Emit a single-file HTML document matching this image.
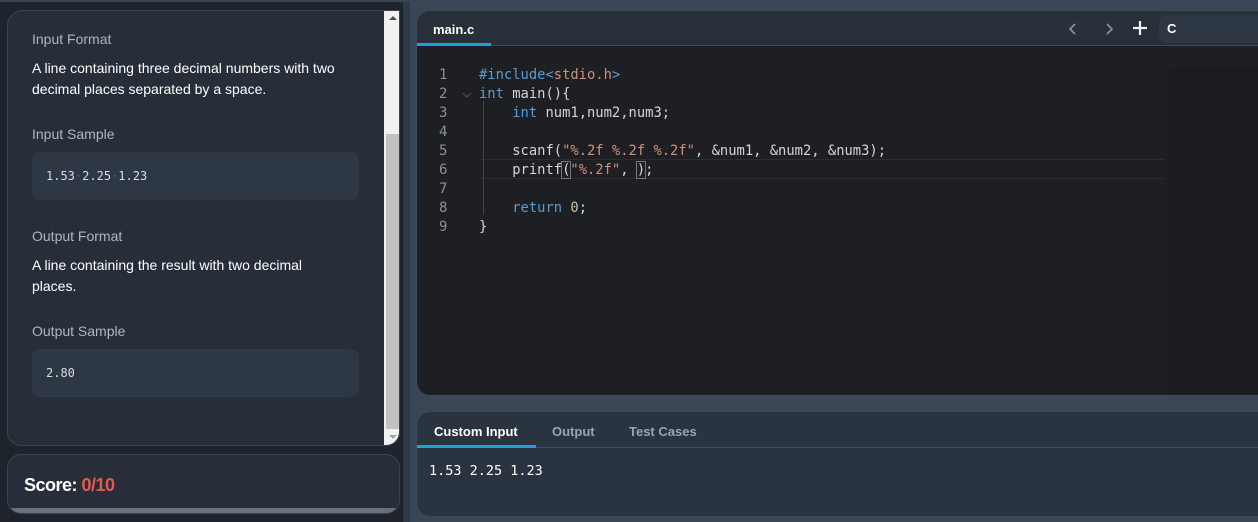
<!DOCTYPE html>
<html><head><style>
*{margin:0;padding:0;box-sizing:border-box}
body{width:1258px;height:522px;overflow:hidden;background:#1f242c;font-family:"Liberation Sans",sans-serif;position:relative}
.abs{position:absolute}
.mono{font-family:"DejaVu Sans Mono","Liberation Mono",monospace}
</style></head><body>
<div class="abs" style="left:0;top:0;width:1258px;height:2px;background:#394454"></div>
<div class="abs" style="left:7px;top:10px;width:393px;height:436px;background:#282e39;border:1px solid #394352;border-radius:16px 0 14px 14px;overflow:hidden">
  <div class="abs" style="left:24px;top:20px;color:#aeb6c2;font-size:14px">Input Format</div>
  <div class="abs" style="left:24px;top:47px;width:335px;color:#fff;font-size:14px;line-height:21px">A line containing three decimal numbers with two decimal places separated by a space.</div>
  <div class="abs" style="left:24px;top:115px;color:#aeb6c2;font-size:14px">Input Sample</div>
  <div class="abs mono" style="left:24px;top:141px;width:327px;height:48px;background:#2e3744;border-radius:8px;color:#d8dde3;font-size:12px;padding:17px 14px">1.53<span style="color:#5a6472">·</span>2.25<span style="color:#5a6472">·</span>1.23</div>
  <div class="abs" style="left:24px;top:217px;color:#aeb6c2;font-size:14px">Output Format</div>
  <div class="abs" style="left:24px;top:244px;width:305px;color:#fff;font-size:14px;line-height:21px">A line containing the result with two decimal places.</div>
  <div class="abs" style="left:24px;top:312px;color:#aeb6c2;font-size:14px">Output Sample</div>
  <div class="abs mono" style="left:24px;top:338px;width:327px;height:48px;background:#2e3744;border-radius:8px;color:#d8dde3;font-size:12px;padding:17px 14px">2.80</div>
  <div class="abs" style="left:376px;top:0;width:17px;height:436px;background:#f1f1f1"></div>
  <div class="abs" style="left:378px;top:123px;width:13px;height:295px;background:#c1c1c1"></div>
  <div class="abs" style="left:381px;top:5px;width:0;height:0;border-left:4px solid transparent;border-right:4px solid transparent;border-bottom:4px solid #505050"></div>
  <div class="abs" style="left:381px;top:424px;width:0;height:0;border-left:4px solid transparent;border-right:4px solid transparent;border-top:4px solid #a3a3a3"></div>
</div>
<div class="abs" style="left:7px;top:454px;width:393px;height:60px;background:#282e39;border:1px solid #394352;border-radius:14px;overflow:hidden">
  <div class="abs" style="left:16px;top:20px;color:#fff;font-size:18px;font-weight:bold;letter-spacing:-0.5px">Score: <span style="color:#e8584a">0/10</span></div>
  <div class="abs" style="left:0;top:53px;width:393px;height:7px;background:#6b717b"></div>
</div>
<div class="abs" style="left:403px;top:2px;width:855px;height:520px;background:#3a4656"></div>
<div class="abs" style="left:403px;top:2px;width:7px;height:520px;background:#2f3a48"></div>
<div class="abs" style="left:416px;top:10px;width:850px;height:386px;background:#1e1f22;border:1px solid #3d4a5a;border-radius:14px 0 0 14px;overflow:hidden">
  <div class="abs" style="left:0;top:0;width:850px;height:35px;background:#283039;border-bottom:1px solid #3d4a5a"></div>
  <div class="abs" style="left:16px;top:11px;color:#fff;font-size:13px;font-weight:bold">main.c</div>
  <div class="abs" style="left:0;top:32px;width:74px;height:3px;background:#1fa0dc"></div>
  <svg class="abs" style="left:650px;top:11px" width="12" height="14"><path d="M8 2 L3 7 L8 12" stroke="#8a93a0" stroke-width="1.6" fill="none"/></svg>
  <svg class="abs" style="left:686px;top:11px" width="12" height="14"><path d="M4 2 L9 7 L4 12" stroke="#8a93a0" stroke-width="1.6" fill="none"/></svg>
  <svg class="abs" style="left:716px;top:10px" width="14" height="14"><path d="M7 0 V14 M0 7 H14" stroke="#eef0f3" stroke-width="2.2"/></svg>
  <div class="abs" style="left:742px;top:4px;width:110px;height:28px;background:#2e3744;border-radius:8px;color:#fff;font-size:13px;font-weight:bold;padding:6px 8px">C</div>
  <div class="abs" style="left:752px;top:55px;width:98px;height:330px;background:#1b1c1f"></div>
  <div class="abs" style="left:62px;top:148px;width:685px;height:20px;border-top:1px solid #2c2d31;border-bottom:1px solid #2c2d31"></div>
  <div class="abs" style="left:66px;top:90px;width:1px;height:114px;background:#444"></div>
  <pre class="abs mono" style="left:22px;top:55px;color:#8c9199;font-size:14px;line-height:19px;text-align:right">1
2
3
4
5
6
7
8
9</pre>
  <svg class="abs" style="left:45px;top:80px" width="10" height="8"><path d="M1 2 L5 6 L9 2" stroke="#555" stroke-width="1" fill="none"/></svg>
  <pre class="abs mono" style="left:62px;top:55px;color:#d4d4d4;font-size:13.8px;line-height:19px"><span style="color:#569cd6">#include</span><span style="color:#569cd6">&lt;</span><span style="color:#ce9178">stdio.h</span><span style="color:#569cd6">&gt;</span>
<span style="color:#569cd6">int</span> main(){
    <span style="color:#569cd6">int</span> num1,num2,num3;

    scanf(<span style="color:#ce9178">"%.2f %.2f %.2f"</span>, &amp;num1, &amp;num2, &amp;num3);
    printf<span style="outline:1px solid #777">(</span><span style="color:#ce9178">"%.2f"</span>, <span style="outline:1px solid #777">)</span>;

    <span style="color:#569cd6">return</span> <span style="color:#b5cea8">0</span>;
}</pre>
</div>
<div class="abs" style="left:416px;top:411px;width:850px;height:106px;background:#2a3340;border:1px solid #3d4a5a;border-radius:14px 0 0 14px;overflow:hidden">
  <div class="abs" style="left:0;top:0;width:850px;height:36px;border-bottom:1px solid #3d4a5a"></div>
  <div class="abs" style="left:17px;top:12px;color:#fff;font-size:13px;font-weight:bold">Custom Input</div>
  <div class="abs" style="left:135px;top:12px;color:#9aa3ae;font-size:13px;font-weight:bold">Output</div>
  <div class="abs" style="left:212px;top:12px;color:#9aa3ae;font-size:13px;font-weight:bold">Test Cases</div>
  <div class="abs" style="left:0;top:33px;width:119px;height:3px;background:#1fa0dc"></div>
  <div class="abs mono" style="left:12px;top:51px;color:#fff;font-size:13.5px">1.53 2.25 1.23</div>
</div>
</body></html>
